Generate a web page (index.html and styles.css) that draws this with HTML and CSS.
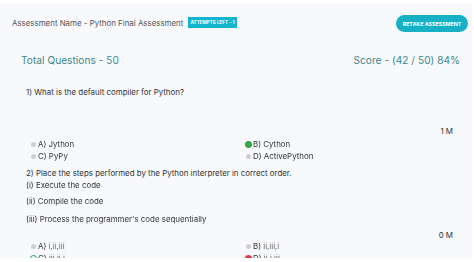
FILE: index.html
```html
<!DOCTYPE html>
<html>
<head>
<meta charset="utf-8">
<link rel="stylesheet" href="styles.css">
</head>
<body>
<div class="page">
  <header class="head">
    <div class="title">Assessment Name - Python Final Assessment <span class="badge">ATTEMPTS LEFT - 1</span></div>
    <button class="retake">RETAKE ASSESSMENT</button>
  </header>
  <div class="summary">
    <div>Total Questions - 50</div>
    <div>Score - (42 / 50) 84%</div>
  </div>
  <section class="q q1">
    <p class="qtext">1) What is the default compiler for Python?</p>
    <div class="marks">1 M</div>
    <div class="opts">
      <div class="opt"><span class="dot"></span><span class="lbl">A) Jython</span></div>
      <div class="opt"><span class="dot sel-right"></span><span class="lbl">B) Cython</span></div>
      <div class="opt"><span class="dot"></span><span class="lbl">C) PyPy</span></div>
      <div class="opt"><span class="dot"></span><span class="lbl">D) ActivePython</span></div>
    </div>
  </section>
  <section class="q q2">
    <p class="qtext">2) Place the steps performed by the Python interpreter in correct order.</p>
    <p class="line l1"><span class="lbl">(i) Execute the code</span></p>
    <p class="line l2"><span class="lbl">(ii) Compile the code</span></p>
    <p class="line l3"><span class="lbl">(iii) Process the programmer's code sequentially</span></p>
    <div class="marks m2">0 M</div>
    <div class="opts">
      <div class="opt"><span class="dot"></span><span class="lbl">A) <span class="num">i,ii,iii</span></span></div>
      <div class="opt"><span class="dot"></span><span class="lbl">B) <span class="num">ii,iii,i</span></span></div>
      <div class="opt"><span class="dot ring"></span><span class="lbl">C) <span class="num">iii,ii,i</span></span></div>
      <div class="opt"><span class="dot sel-wrong"></span><span class="lbl">D) <span class="num">ii,i,iii</span></span></div>
    </div>
  </section>
</div>
</body>
</html>
```

FILE: styles.css
```css
* { box-sizing: border-box; }
html, body { margin: 0; padding: 0; background: #fff; }
body { font-family: Inter, "DejaVu Sans", sans-serif; color: #333; }
.page {
  margin: 3px 2px 0 0;
  height: 255px;
  overflow: hidden;
  background: #f7f9fc;
}
.head {
  display: flex;
  justify-content: space-between;
  align-items: center;
  padding: 10px 4px 0 12px;
  height: 29px;
}
.title {
  font-size: 7.9px;
  color: #555;
  display: flex;
  align-items: center;
  white-space: pre;
}
.badge {
  margin-left: 2px;
  background: #12b5cb;
  color: #fff;
  font-size: 4.6px;
  font-weight: 700;
  padding: 3px 3px;
  line-height: 5px;
}
.retake {
  border: none;
  background: #17b0c5;
  color: #fff;
  font-family: inherit;
  font-size: 5.3px;
  font-weight: 700;
  border-radius: 9px;
  height: 17px;
  width: 72px;
  padding: 0;
  margin-top: 2px;
}
.summary {
  display: flex;
  justify-content: space-between;
  padding: 0 12px 0 21px;
  margin-top: 21px;
  font-size: 10.1px;
  letter-spacing: 0.05px;
  color: #3f8787;
  line-height: 14px;
}
.q { padding: 0 19px 0 26px; font-size: 7.9px; color: #333; }
.qtext { margin: 0; line-height: 10px; }
.q1 .qtext { margin-top: 20px; }
.marks { text-align: right; line-height: 10px; }
.q1 .marks { margin-top: 29px; }
.opts {
  display: grid;
  grid-template-columns: 215px 1fr;
  padding-left: 5px;
  row-gap: 2px;
  margin-top: 3px;
}
.q2 .opts { margin-top: 1px; }
.opt { display: flex; align-items: center; line-height: 10px; }
.lbl { color: #333; display: inline-block; filter: grayscale(1); }
.num { color: #666; }
.dot {
  width: 5px; height: 5px; border-radius: 50%;
  background: #d0d0d0;
  margin-right: 2px;
}
.dot.sel-right { width: 7px; height: 7px; margin-left: -1px; margin-right: 1px; background: #34b04a; border: 1.5px solid #1f8a35; }
.dot.sel-wrong { width: 7px; height: 7px; margin-left: -1px; margin-right: 1px; background: #e23a3f; }
.dot.ring { width: 7px; height: 7px; margin-left: -1px; margin-right: 1px; background: transparent; border: 1px solid #2e9b45; }
.q2 .qtext { margin-top: 7px; }
.line { margin: 2px 0 0; line-height: 10px; }
.l2 { margin-top: 6px; }
.l3 { margin-top: 8px; }
.m2 { margin-top: 6px; }
```
